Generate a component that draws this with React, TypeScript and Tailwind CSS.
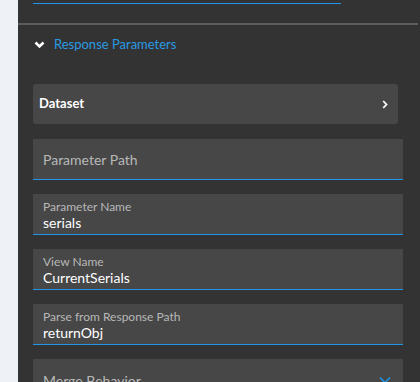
import React from "react";

function Field({ label, value }: { label: string; value?: string }) {
  if (!value) {
    return (
      <div className="shrink-0 h-[41px] bg-[#474747] border-b border-[#2196e6] flex items-center px-[10px]">
        <span className="text-[14px] text-[#b8b8b8] leading-none pt-[2px]">{label}</span>
      </div>
    );
  }
  return (
    <div className="shrink-0 h-[41px] bg-[#474747] border-b border-[#2196e6] flex flex-col justify-center px-[10px] pt-[1px]">
      <span className="text-[12px] text-[#b8b8b8] leading-[15px]">{label}</span>
      <span className="text-[14px] text-white leading-[17px]">{value}</span>
    </div>
  );
}

export default function App() {
  return (
    <div
      className="flex w-[420px] h-[382px] overflow-hidden bg-[#eef2f6]"
      style={{ fontFamily: "Lato, 'Noto Sans', sans-serif" }}
    >
      <div className="w-[18px] shrink-0" />
      <div className="flex-1 bg-[#333333] flex flex-col">
        <div className="shrink-0 h-[23px] pl-[15px] pr-[79px] pt-[3px]">
          <div className="h-[1px] bg-[#2196e6]" />
        </div>
        <div className="shrink-0 h-[2px] bg-[#5c5c5c] mr-[2px]" />
        <div className="shrink-0 flex items-center gap-[9px] pl-[16px] h-[40px]">
          <svg width="11" height="8" viewBox="0 0 11 8">
            <path d="M1.5 1.5 L5.5 5.5 L9.5 1.5" stroke="#ffffff" strokeWidth="2.6" fill="none" />
          </svg>
          <span className="text-[13px] text-[#2a9ae4]">Response Parameters</span>
        </div>
        <div className="shrink-0 flex flex-col pl-[15px] pr-[17px] pt-[19px]">
          <div className="shrink-0 h-[40px] bg-[#474747] rounded-[3px] flex items-center justify-between pl-[6px] pr-[10px] mr-[5px]">
            <span className="text-[13px] font-bold text-white">Dataset</span>
            <svg width="6" height="9" viewBox="0 0 6 9">
              <path d="M1.2 1 L4.5 4.5 L1.2 8" stroke="#ffffff" strokeWidth="1.8" fill="none" />
            </svg>
          </div>
          <div className="flex flex-col gap-[14px] mt-[15px]">
            <Field label="Parameter Path" />
            <Field label="Parameter Name" value="serials" />
            <Field label="View Name" value="CurrentSerials" />
            <Field label="Parse from Response Path" value="returnObj" />
            <div className="shrink-0 h-[41px] bg-[#474747] flex items-start justify-between pl-[10px] pr-[12px] pt-[15px]">
              <span className="text-[14px] text-[#b8b8b8] leading-none">Merge Behavior</span>
              <svg width="12" height="8" viewBox="0 0 12 8" className="mt-[2px]">
                <path d="M1 1.5 L6 6.5 L11 1.5" stroke="#2196e6" strokeWidth="1.6" fill="none" />
              </svg>
            </div>
          </div>
        </div>
      </div>
    </div>
  );
}
